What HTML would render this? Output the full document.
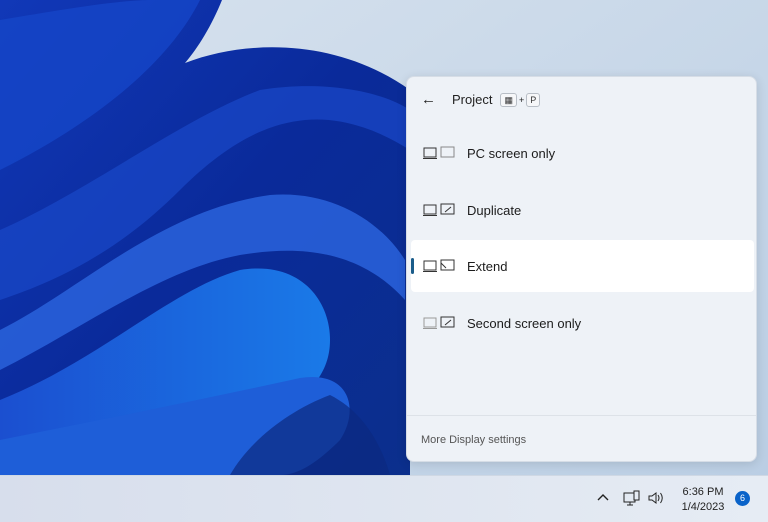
<!DOCTYPE html>
<html><head><meta charset="utf-8"><style>
*{margin:0;padding:0;box-sizing:border-box}
body{width:768px;height:522px;overflow:hidden;position:relative;font-family:"Liberation Sans",sans-serif;background:#c9d8e8}
.bg{position:absolute;left:0;top:0}
.panel{position:absolute;left:406px;top:76px;width:351px;height:386px;background:#eef2f7;border:1px solid #d6dde6;border-radius:8px;box-shadow:0 2px 10px rgba(0,0,0,.12);overflow:hidden}
.hdr{position:absolute;left:14px;top:14px;font-size:13px;color:#222;display:flex;align-items:center}
.key{display:inline-block;border:1px solid #b8bec6;border-radius:3px;height:14px;font-size:9px;line-height:12px;padding:0 3px;color:#333;background:#f6f7f9}
.row{position:absolute;left:4px;width:343px;height:52px;display:flex;align-items:center;font-size:13px;color:#1c1c1c;border-radius:4px}
.row svg{margin-left:12px;margin-right:12px}
.sel{background:#fff}
.bar{position:absolute;left:0;top:18px;width:3px;height:16px;background:#1a5c8a;border-radius:2px}
.foot{position:absolute;left:0;top:338px;width:100%;border-top:1px solid #dde2e8;height:48px;font-size:11px;color:#555;padding:18px 14px}
.task{position:absolute;left:0;top:475px;width:768px;height:47px;background:linear-gradient(90deg,#d7deec,#e6ecf4);border-top:1px solid #cfd8e4}
</style></head><body>
<svg class="bg" width="768" height="522">
<defs>
<linearGradient id="g1" x1="0" y1="0" x2="1" y2="1"><stop offset="0" stop-color="#1138b8"/><stop offset=".5" stop-color="#0a2a9a"/><stop offset="1" stop-color="#0b2f8c"/></linearGradient>
<linearGradient id="g2" x1="0" y1="0" x2="1" y2="0"><stop offset="0" stop-color="#1b4fd0"/><stop offset="1" stop-color="#1a7ae8"/></linearGradient>
<linearGradient id="sky" x1="0" y1="0" x2="1" y2="1"><stop offset="0" stop-color="#d7e2ee"/><stop offset="1" stop-color="#b9cde3"/></linearGradient>
</defs>
<rect width="768" height="522" fill="url(#sky)"/>
<path d="M0,0 L222,0 C212,25 198,48 185,63 C250,38 340,40 410,90 L410,475 L0,475 Z" fill="url(#g1)"/>
<path d="M0,20 C60,10 120,0 150,0 L200,0 C170,60 100,120 0,170 Z" fill="#1546c8" opacity=".8"/>
<path d="M0,230 C90,190 180,120 260,90 C320,80 380,90 410,110 L410,150 C330,100 260,110 180,190 C120,250 60,280 0,300 Z" fill="#1a49c9" opacity=".7"/>
<path d="M0,330 C80,290 160,210 270,195 C330,190 380,220 405,260 L405,300 C360,250 300,245 240,255 C160,270 80,330 0,370 Z" fill="#2a63dc" opacity=".85"/>
<path d="M0,400 C100,360 170,290 240,270 C300,260 330,300 330,340 C330,380 300,400 270,420 C220,450 120,460 0,470 Z" fill="url(#g2)"/>
<path d="M0,440 C100,420 200,400 300,378 C350,370 360,410 340,440 C320,460 300,475 280,475 L0,475 Z" fill="#1e5ed8"/>
<path d="M230,475 C250,440 290,410 330,395 C360,410 380,440 390,475 Z" fill="#0c2a80" opacity=".7"/>
</svg>
<div class="panel">
 <div class="hdr"><span style="font-size:15px;margin-right:16px">&#8592;</span>Project<span style="margin-left:8px" class="key">&#9638;</span><span style="font-size:9px;margin:0 2px">+</span><span class="key">P</span></div>
 <div class="row" style="top:50px"><svg width="32" height="14"><rect x="1" y="2" width="12" height="9" fill="none" stroke="#333" stroke-width="1"/><path d="M0 12.5h14" stroke="#333"/><rect x="18" y="1" width="13" height="10" fill="none" stroke="#888"/></svg>PC screen only</div>
 <div class="row" style="top:107px"><svg width="32" height="14"><rect x="1" y="2" width="12" height="9" fill="none" stroke="#333"/><path d="M0 12.5h14" stroke="#333"/><rect x="18" y="1" width="13" height="10" fill="none" stroke="#333"/><path d="M22 9l6-5" stroke="#333"/></svg>Duplicate</div>
 <div class="row sel" style="top:163px"><div class="bar"></div><svg width="32" height="14"><rect x="1" y="2" width="12" height="9" fill="none" stroke="#333"/><path d="M0 12.5h14" stroke="#333"/><rect x="18" y="1" width="13" height="10" fill="none" stroke="#333"/><path d="M18 4l5 5" stroke="#333"/></svg>Extend</div>
 <div class="row" style="top:220px"><svg width="32" height="14"><rect x="1" y="2" width="12" height="9" fill="none" stroke="#999"/><path d="M0 12.5h14" stroke="#999"/><rect x="18" y="1" width="13" height="10" fill="none" stroke="#333"/><path d="M22 9l6-5" stroke="#333"/></svg>Second screen only</div>
 <div class="foot">More Display settings</div>
</div>
<div class="task">
 <svg style="position:absolute;left:596px;top:16px" width="14" height="10"><path d="M2 8l5-5 5 5" fill="none" stroke="#222" stroke-width="1.4"/></svg>
 <svg style="position:absolute;left:623px;top:14px" width="18" height="18"><rect x="1" y="3" width="11" height="9" fill="none" stroke="#222"/><path d="M4 15h6M7 12v3" stroke="#222"/><rect x="11" y="1" width="5" height="9" fill="#e6ecf4" stroke="#222"/></svg>
 <svg style="position:absolute;left:647px;top:14px" width="18" height="16"><path d="M2 6h3l4-3v10l-4-3H2z" fill="none" stroke="#222"/><path d="M11 5q2 3 0 6M13.5 3q3.5 5 0 10" fill="none" stroke="#222"/></svg>
 <div style="position:absolute;left:675px;top:9px;width:56px;text-align:center;font-size:11px;line-height:15px;color:#222">6:36 PM<br>1/4/2023</div>
 <div style="position:absolute;left:735px;top:15px;width:15px;height:15px;border-radius:50%;background:#0a63c9;color:#fff;font-size:9px;text-align:center;line-height:15px">6</div>
</div>
</body></html>
